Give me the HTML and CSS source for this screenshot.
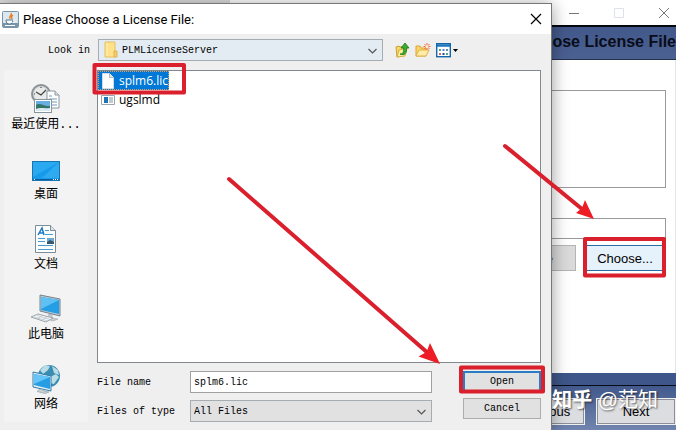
FILE: index.html
```html
<!DOCTYPE html>
<html lang="zh-CN">
<head>
  <meta charset="UTF-8">
  <title>Please Choose a License File</title>
  <link rel="stylesheet" href="styles.css">
</head>
<body>
  <div class="desktop">

    <!-- installer window behind the dialog -->
    <section class="installer">
      <div class="installer-bar">
        <button class="win-btn" aria-label="Minimize"><svg width="12" height="12" viewBox="0 0 12 12"><path d="M1 6.500h10" stroke="#777" fill="none"/></svg></button>
        <button class="win-btn" aria-label="Maximize" disabled><svg width="12" height="12" viewBox="0 0 12 12"><path d="M1.500 1.500h9v9h-9z" stroke="#dde2ea" fill="none"/></svg></button>
        <button class="win-btn" aria-label="Close installer"><svg width="12" height="12" viewBox="0 0 12 12"><path d="M1 1l10 10M11 1L1 11" stroke="#777" fill="none"/></svg></button>
      </div>
      <h1 class="installer-title">Choose License File</h1>
      <div class="installer-body">
        <textarea class="license-info" aria-label="License information" readonly></textarea>
        <input class="license-path" type="text" aria-label="License file path">
        <div class="license-actions">
          <button class="btn-restore">Restore</button>
          <button class="btn-choose">Choose...</button>
        </div>
      </div>
      <footer class="installer-footer">
        <button class="nav-btn">Previous</button>
        <button class="nav-btn">Next</button>
      </footer>
    </section>

    <!-- file dialog -->
    <section class="dialog">
      <header class="dialog-bar">
        <svg class="java-icon" width="17" height="17" viewBox="0 0 17 17">
          <rect x=".5" y=".5" width="16" height="16" rx="1" fill="#dce8ef" stroke="#7794a8"/>
          <path d="M1 12h15v4H1z" fill="#7896aa"/>
          <path d="M9 2c2 2-3 3-1 6M11 4c-2 1-2 2-1 4" stroke="#e57a20" stroke-width="1.300" fill="none"/>
          <path d="M4 9h7c-.3 3-1 4-3.500 4S4.300 12 4 9z" fill="#fff" stroke="#52758c"/>
          <path d="M11 9.500c3-.5 2 2.500-.5 2M3 14.500h10" stroke="#fff" fill="none"/>
        </svg>
        <h2 class="dialog-title">Please Choose a License File:</h2>
        <button class="win-btn" aria-label="Close"><svg width="12" height="12" viewBox="0 0 12 12"><path d="M1 1l10 10M11 1L1 11" stroke="#000" stroke-width="1.200" fill="none"/></svg></button>
      </header>

      <div class="toolbar">
        <label class="look-label" for="lookIn">Look in</label>
        <div class="combo look-combo">
          <svg class="combo-folder" width="14" height="17" viewBox="0 0 14 17"><path d="M1 1h10v15H1z" fill="#ffe18a" stroke="#e6be5c"/><path d="M10 10h3v6h-3z" fill="#f5cf6c" stroke="#dcb450"/><path d="M3 2v13" stroke="#fff0b8"/></svg>
          <select id="lookIn"><option>PLMLicenseServer</option></select>
          <svg class="combo-arrow" width="9" height="6" viewBox="0 0 9 6"><path d="M.5 1l4 4 4-4" stroke="#555" stroke-width="1.200" fill="none"/></svg>
        </div>
        <div class="tools">
          <button class="tool" aria-label="Up one level"><svg width="15" height="16" viewBox="0 0 15 16"><path d="M1 5l3-1 1 1 5-1v9l-8 2z" fill="#f8d76a" stroke="#caa02f"/><path d="M2 15l2-7 8-2-2 8z" fill="#ffec9e" stroke="#d5ae3e"/><path d="M5 12c3 0 4-2 3.500-6H6l4-5 4 5h-2.500c.5 5-2 8-6.500 6z" fill="#3cae2f" stroke="#16761b" stroke-width=".8"/></svg></button>
          <button class="tool" aria-label="New folder"><svg width="16" height="14" viewBox="0 0 16 14"><path d="M1 13V3h4l1 2h5v8z" fill="#f8d469" stroke="#d9a53a"/><path d="M1 13l3-6h10l-3 6z" fill="#ffeda6" stroke="#e0b34c"/><path d="M12 0v7M8.500 3.500h7M9.500 1l5 5M14.500 1l-5 5" stroke="#ed6b3b"/><circle cx="12" cy="3.500" r="1.500" fill="#fff0d0"/></svg></button>
          <button class="tool" aria-label="View menu"><svg width="23" height="15" viewBox="0 0 23 15"><rect x=".7" y=".7" width="13.600" height="13" fill="#fff" stroke="#1466a8" stroke-width="1.400"/><path d="M1 2.500h13" stroke="#1b76bd" stroke-width="2.500"/><path d="M3 6h2v2H3zM10 10h2v2h-2z" fill="#55a779"/><path d="M6.500 6h2v2h-2z" fill="#5587ca"/><path d="M10 6h2v2h-2z" fill="#668bb0"/><path d="M3 10h2v2H3z" fill="#c66b6c"/><path d="M6.500 10h2v2h-2z" fill="#174f91"/><path d="M17 6h5l-2.500 3z" fill="#000"/></svg></button>
        </div>
      </div>

      <div class="dialog-main">
        <nav class="places">
          <button class="place">
            <svg width="32" height="32" viewBox="0 0 32 32">
              <circle cx="11" cy="12" r="9" fill="#d2d5d6" stroke="#8c9397" stroke-width="2"/><circle cx="11" cy="12" r="7" fill="#e9ebeb"/>
              <path d="M6 10l5 3 5-5M11 5v1M4 12h1M17 12h1" stroke="#444" stroke-width="1.200" fill="none"/>
              <path d="M17 9h8l4 4v13H17z" fill="#fff" stroke="#8b969e"/><path d="M25 9v4h4" fill="#dce3e7" stroke="#8b969e"/><path d="M19 14h3M19 17h8M19 20h8M19 23h8" stroke="#6e9abe"/>
              <rect x="4.500" y="17.500" width="17" height="13" fill="#fff" stroke="#87949c"/><path d="M6 19h14v10H6z" fill="#69aee0"/><path d="M6 23c4-3 8 2 14 1v5H6z" fill="#337565"/><path d="M6 27c5-2 8 0 14-1v3H6z" fill="#d8e9ef"/>
            </svg>
            <span>最近使用...</span>
          </button>
          <button class="place">
            <svg width="32" height="32" viewBox="0 0 32 32"><rect x="2.500" y="9.500" width="27" height="19" fill="#169bea" stroke="#1874b2"/><path d="M3 10h26L3 25z" fill="#2aa8f0"/><path d="M12 26L29 10v16z" fill="#44b7f6" opacity=".55"/><path d="M3 27.500h26" stroke="#0c5c9d"/><path d="M4 27.500h2M23 27.500h5" stroke="#fff" stroke-dasharray="1 1"/></svg>
            <span>桌面</span>
          </button>
          <button class="place">
            <svg width="32" height="32" viewBox="0 0 32 32"><path d="M5.500 3.500h15l5 5v22h-20z" fill="#fdfefe" stroke="#7b8d99"/><path d="M20.500 3.500v5h5" fill="#dce5ea" stroke="#7b8d99"/><path d="M8 13l4-7 2 7M9 11h4" stroke="#1f7bc1" stroke-width="1.500" fill="none"/><path d="M15 8.500h4M15 12.500h8M8 16.500h7M8 19.500h7M8 23.500h15M8 27.500h15" stroke="#4c9bd0"/><path d="M17 16h7v6h-7z" fill="#6fa8d2"/><path d="M17 20l3-2 4 2v2h-7z" fill="#34586e"/></svg>
            <span>文档</span>
          </button>
          <button class="place">
            <svg width="32" height="32" viewBox="0 0 32 32"><path d="M10 3l20 4v17L10 19z" fill="#bcc8d0" stroke="#74838e"/><path d="M11 5l18 3v14l-18-4z" fill="#249ee5"/><path d="M11 5l18 3-18 9z" fill="#5fc0f3"/><path d="M19 22l3 1v3l6 1-5 2-6-2z" fill="#c9d0d5" stroke="#98a5ad" stroke-width=".6"/><path d="M1 25l7-3 15 4-7 4z" fill="#f4f6f7" stroke="#9ba6ac"/><path d="M4 25l14 4M7 23.500l13 4M7 27l5-3M12 28l5-3" stroke="#b8c2c8" stroke-width=".7"/></svg>
            <span>此电脑</span>
          </button>
          <button class="place">
            <svg width="32" height="32" viewBox="0 0 32 32"><circle cx="19" cy="14" r="11" fill="#3a8db2"/><path d="M10 8l5-5 5 1-2 4-5 4zM22 4l6 4 1 5-5-2zM20 15l6-3 3 3-5 7-5-1z" fill="#b9dce5"/><path d="M3 10l18 4v15L3 25z" fill="#e4edf2" stroke="#337caa"/><path d="M4 12l16 3v12L4 23z" fill="#279de3"/><path d="M4 12l16 3-16 7z" fill="#65c5f6"/><path d="M10 27l4 1v1l5 1-4 1.500-8-2z" fill="#c6d1d7" stroke="#8e9ba3" stroke-width=".6"/></svg>
            <span>网络</span>
          </button>
        </nav>

        <div class="dialog-content">
          <ul class="file-list">
            <li><button class="file selected"><svg width="14" height="16" viewBox="0 0 14 16"><path d="M1.500.5h7l4 4v11h-11z" fill="#fff" stroke="#d6dce1"/><path d="M8.500.5v4h4" fill="#e4e8eb" stroke="#acb9c3"/></svg><span>splm6.lic</span></button></li>
            <li><button class="file"><svg width="14" height="16" viewBox="0 0 14 16"><path d="M.5 3.500h13v9H.5z" fill="#fff" stroke="#9aa5ad"/><path d="M3 5h4v6H3z" fill="#1f73b7"/><path d="M8 6h4M8 8h4M8 10h4" stroke="#8094a1"/></svg><span>ugslmd</span></button></li>
          </ul>

          <form class="file-form">
            <div class="fields">
              <label for="fileName">File name</label>
              <input id="fileName" class="file-name" type="text" value="splm6.lic">
              <label for="fileType">Files of type</label>
              <div class="combo type-combo">
                <select id="fileType"><option>All Files</option></select>
                <svg class="combo-arrow" width="9" height="6" viewBox="0 0 9 6"><path d="M.5 1l4 4 4-4" stroke="#555" stroke-width="1.200" fill="none"/></svg>
              </div>
            </div>
            <div class="form-actions">
              <button type="button" class="btn-open">Open</button>
              <button type="button">Cancel</button>
            </div>
          </form>
        </div>
      </div>
    </section>

    <div class="watermark"><b>知乎</b> @范知</div>

    <!-- red callouts -->
    <svg class="callouts" viewBox="0 0 676 430" preserveAspectRatio="none">
      <g fill="none" stroke="#d9202c" stroke-width="4" stroke-linejoin="round" stroke-linecap="round">
        <path d="M94.500 65h89.500v27.500H94.500zM585 239h79v36.500h-79zM461 367.500h82v24H461z"/>
        <path d="M229 179l200 175M505 146l77 63"/>
      </g>
      <path d="M440 364l-21.500-7.500 8-4.500 3.500-9zM594 219l-18-6 6-5 3-8z" fill="#ee1c25"/>
    </svg>
  </div>
</body>
</html>
```
FILE: styles.css
```css
* {
  box-sizing: border-box;
}

body {
  margin: 0;
  font-family: Arial, "Liberation Sans", sans-serif;
  font-size: 13px;
  color: #000;
}

button, input, select, textarea {
  font: inherit;
  color: inherit;
  margin: 0;
  padding: 0;
  border-radius: 0;
}

svg {
  display: block;
  flex: none;
}

.desktop {
  position: relative;
  min-height: 100vh;
  overflow: hidden;
  background: #dcdcdc;
}

/* installer window */
.installer {
  position: absolute;
  top: 0;
  right: 0;
  bottom: 0;
  left: 34%;
  display: flex;
  flex-direction: column;
  background: #fff;
}

.installer-bar {
  display: flex;
  justify-content: flex-end;
  gap: 33px;
  height: 25px;
  padding-right: 6px;
}

.win-btn {
  display: flex;
  align-items: center;
  border: none;
  background: none;
}

.installer-title {
  height: 35px;
  margin: 0;
  border-top: 2px solid #05070e;
  border-bottom: 1px solid #26314c;
  background: linear-gradient(#43588a, #4b6192);
  color: #080c18;
  font-size: 16px;
  line-height: 29px;
  text-align: right;
  white-space: nowrap;
}

.installer-body {
  flex: 1;
  display: flex;
  flex-direction: column;
  padding: 30px 9px 0;
  border-right: 1px solid #e4e4e4;
}

.license-info {
  height: 98px;
  margin-bottom: 30px;
  border: 1px solid #999;
  background: #fff;
  resize: none;
}

.license-path {
  height: 21px;
  border: 1px solid #999;
  background: #fff;
}

.license-actions {
  display: flex;
  justify-content: flex-end;
  gap: 10px;
  padding: 6px 2px 0 0;
}

.license-actions button {
  height: 26px;
}

.btn-restore {
  padding: 0 22px;
  border: 1px solid #b4b4b4;
  background: #dadada;
}

.btn-choose {
  width: 78px;
  border: 1px solid #2a6ea6;
  background: #e5f1fb;
}

.installer-footer {
  display: flex;
  justify-content: flex-end;
  gap: 11px;
  height: 57px;
  padding-top: 25px;
  background: linear-gradient(#3e5689 12px, #080c18 12px, #080c18 13px, #42598c 13px, #7184af);
}

.nav-btn {
  width: 80px;
  height: 27px;
  border: 1px solid #f0f0f0;
  outline: 1px solid #8b8f99;
  outline-offset: -2px;
  background: #dcdde0;
}

/* file dialog */
.dialog {
  position: absolute;
  top: 3px;
  right: 124px;
  bottom: 0;
  left: 0;
  display: flex;
  flex-direction: column;
  border: 1px solid #777;
  border-bottom: none;
  border-left: none;
  background: #efefef;
  box-shadow: 0 2px 16px rgba(0, 0, 0, 0.4);
  font-family: "Liberation Mono", "Courier New", monospace;
  font-size: 10px;
}

.dialog-bar {
  display: flex;
  align-items: center;
  gap: 4px;
  height: 30px;
  padding: 0 9px 0 2px;
  background: #fff;
}

.dialog-title {
  flex: 1;
  margin: 0;
  font-family: Roboto, "Open Sans", sans-serif;
  font-size: 13px;
  font-weight: 400;
}

.toolbar {
  display: flex;
  align-items: center;
  padding-top: 5px;
}

.look-label {
  width: 98px;
  padding-right: 8px;
  text-align: right;
}

.combo {
  position: relative;
  display: flex;
}

.combo select {
  width: 100%;
  height: 22px;
  padding-left: 3px;
  border: 1px solid #a5adb3;
  background: #e1e1e1;
  appearance: none;
}

.combo-arrow {
  position: absolute;
  top: 9px;
  right: 6px;
  pointer-events: none;
}

.look-combo {
  flex: 1;
}

.look-combo select {
  padding-left: 23px;
  background: #e4ecf3;
}

.combo-folder {
  position: absolute;
  top: 2px;
  left: 6px;
}

.tools {
  display: flex;
  align-items: center;
  gap: 5px;
  width: 168px;
  padding-left: 12px;
}

.tool {
  border: none;
  background: none;
}

.dialog-main {
  flex: 1;
  display: flex;
  gap: 9px;
  padding: 9px 10px 8px 4px;
}

.places {
  display: flex;
  flex-direction: column;
  gap: 18px;
  width: 84px;
  padding-top: 12px;
  background: #f3f3f3;
}

.place {
  display: flex;
  flex-direction: column;
  align-items: center;
  gap: 2px;
  height: 52px;
  border: none;
  background: none;
  font-family: "Liberation Mono", "Noto Sans CJK SC", sans-serif;
  font-size: 12px;
  line-height: 18px;
  white-space: nowrap;
}

.dialog-content {
  flex: 1;
  display: flex;
  flex-direction: column;
  gap: 8px;
}

.file-list {
  flex: 1;
  margin: 0;
  padding: 0;
  border: 1px solid #828790;
  background: #fff;
  list-style: none;
}

.file {
  display: flex;
  align-items: center;
  gap: 4px;
  height: 19px;
  padding-left: 2px;
  border: 1px dotted transparent;
  background: none;
  font-family: "Open Sans", "Noto Sans", sans-serif;
  font-size: 12px;
}

.file.selected {
  border-color: #d8a060;
  background: #0078d7;
  color: #fff;
}

.file-form {
  display: flex;
  gap: 31px;
}

.fields {
  flex: 1;
  display: grid;
  grid-template-columns: 93px 1fr;
  gap: 7px 0;
  align-items: center;
}

.file-name {
  width: 100%;
  height: 22px;
  padding: 0 3px;
  border: 1px solid #a0a0a0;
  background: #fff;
}

.form-actions {
  display: flex;
  flex-direction: column;
  gap: 6px;
  width: 78px;
}

.form-actions button {
  height: 21px;
  border: 1px solid #adadad;
  background: #e1e1e1;
}

.form-actions .btn-open {
  border: 2px solid #2c7cc4;
}

.watermark {
  position: absolute;
  right: 18px;
  bottom: 16px;
  color: #fff;
  font-family: "Liberation Sans", "Noto Sans CJK SC", sans-serif;
  font-size: 20px;
  line-height: 28px;
  text-shadow: 1px 1px 2px rgba(0, 0, 0, 0.6);
  pointer-events: none;
}

.callouts {
  position: absolute;
  top: 0;
  left: 0;
  width: 100%;
  height: 100%;
  pointer-events: none;
}
```
